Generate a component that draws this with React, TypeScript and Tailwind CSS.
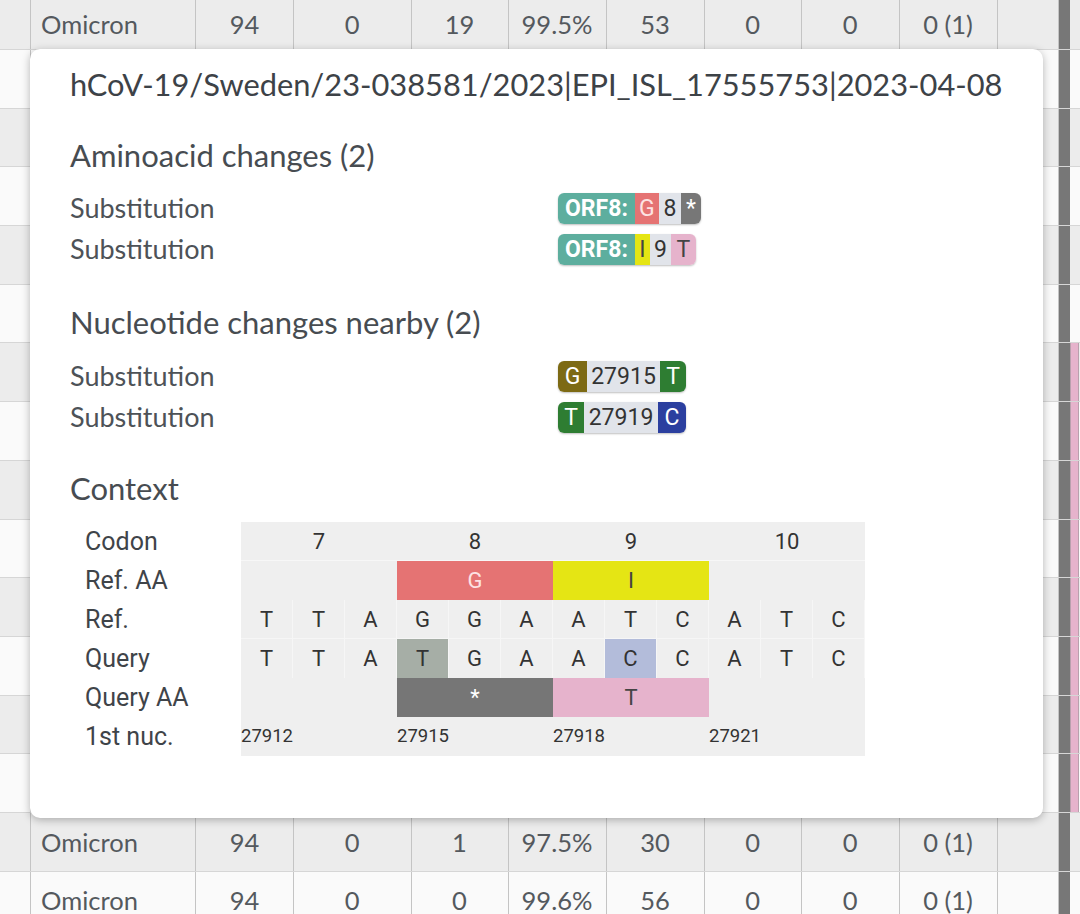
import React from 'react'

type Row = string[]

const cellW = [
  'w-[31px]', 'w-[165px]', 'w-[98px]', 'w-[117.5px]', 'w-[97px]', 'w-[98px]',
  'w-[98px]', 'w-[97.5px]', 'w-[97.5px]', 'w-[98px]', 'w-[61px]',
]

const filler: Row = ['', 'Omicron', '94', '0', '2', '98.9%', '41', '0', '0', '0 (1)', '']
const rows: Row[] = Array.from({ length: 16 }, (_, i) => {
  if (i === 0) return ['', 'Omicron', '94', '0', '19', '99.5%', '53', '0', '0', '0 (1)', '']
  if (i === 14) return ['', 'Omicron', '94', '0', '1', '97.5%', '30', '0', '0', '0 (1)', '']
  if (i === 15) return ['', 'Omicron', '94', '0', '0', '99.6%', '56', '0', '0', '0 (1)', '']
  return filler
})

function BgTable() {
  return (
    <div className="flex flex-col">
      {rows.map((r, i) => {
        const bg = i % 2 === 0 ? 'bg-[#ececec]' : 'bg-[#fafafa]'
        const h = i === 0 ? 'h-[50px]' : 'h-[58.7px]'
        const pink = i >= 6 && i <= 13
        return (
          <div key={i} className={`flex shrink-0 border-b border-[#d6d6d6] ${h} ${bg}`}>
            {r.map((c, j) => (
              <div
                key={j}
                className={`flex shrink-0 items-center border-r border-[#c4c4c4] text-[25.5px] text-[#54595e] ${cellW[j]} ${j === 1 ? 'justify-start pl-[10px]' : 'justify-center'}`}
              >
                {c}
              </div>
            ))}
            <div className="w-[11px] shrink-0 bg-[#777777]" />
            <div className={`w-[9px] shrink-0 ${pink ? 'border-x border-[#b9a0ad] bg-[#e6b3cc]' : ''}`} />
            <div className="w-[2px] shrink-0" />
          </div>
        )
      })}
    </div>
  )
}

function Seg({ className, children }: { className: string; children: React.ReactNode }) {
  return <span className={`flex h-full items-center justify-center ${className}`}>{children}</span>
}

function Badge({ children }: { children: React.ReactNode }) {
  return (
    <span className="inline-flex h-[31px] overflow-hidden rounded-[6px] text-[23px] leading-none shadow-[0_1px_2px_rgba(0,0,0,0.25)]" style={{ fontFamily: 'Roboto, sans-serif' }}>
      {children}
    </span>
  )
}

function ChangeRow({ badge }: { badge: React.ReactNode }) {
  return (
    <div className="flex h-[41px] items-center">
      <div className="w-[488px] text-[27px] text-[#4d5257]">Substitution</div>
      {badge}
    </div>
  )
}

const nucRef = ['T', 'T', 'A', 'G', 'G', 'A', 'A', 'T', 'C', 'A', 'T', 'C']
const nucQuery = ['T', 'T', 'A', 'T', 'G', 'A', 'A', 'C', 'C', 'A', 'T', 'C']

function Context() {
  const labels = ['Codon', 'Ref. AA', 'Ref.', 'Query', 'Query AA', '1st nuc.']
  return (
    <div className="flex" style={{ fontFamily: 'Roboto, sans-serif' }}>
      <div className="flex w-[171px] flex-col pl-[15px]">
        {labels.map(l => (
          <div key={l} className="flex h-[39px] items-center text-[25px] text-[#3f4449]">{l}</div>
        ))}
      </div>
      <div className="grid w-[624px] grid-cols-[repeat(12,52px)] grid-rows-[repeat(6,39px)] bg-[#efefef] text-[22px] text-[#333]">
        {['7', '8', '9', '10'].map(c => (
          <div key={c} className="col-span-3 flex items-center justify-center border-b border-[#f7f7f7]">{c}</div>
        ))}
        <div className="col-span-3" />
        <div className="col-span-3 flex items-center justify-center bg-[#e57373] text-[#fde3e3]">G</div>
        <div className="col-span-3 flex items-center justify-center bg-[#e5e514] text-[#444]">I</div>
        <div className="col-span-3" />
        {nucRef.map((n, i) => (
          <div key={'r' + i} className="flex items-center justify-center border-r border-b border-[#f6f6f6]">{n}</div>
        ))}
        {nucQuery.map((n, i) => (
          <div
            key={'q' + i}
            className={`flex items-center justify-center border-r border-[#f6f6f6] ${i === 3 ? 'bg-[#a6aea6]' : i === 7 ? 'bg-[#b3bcda]' : ''}`}
          >
            {n}
          </div>
        ))}
        <div className="col-span-3" />
        <div className="col-span-3 flex items-center justify-center bg-[#767676] text-white">*</div>
        <div className="col-span-3 flex items-center justify-center bg-[#e6b3cc] text-[#444]">T</div>
        <div className="col-span-3" />
        {['27912', '27915', '27918', '27921'].map(p => (
          <div key={p} className="col-span-3 flex items-center text-[18.5px] text-[#333]">{p}</div>
        ))}
      </div>
    </div>
  )
}

export default function App() {
  return (
    <div className="relative h-[914px] w-[1080px] overflow-hidden bg-white" style={{ fontFamily: 'Lato, sans-serif' }}>
      <BgTable />
      <div className="absolute left-[30px] top-[49px] h-[769px] w-[1013px] rounded-[10px] bg-white px-[40px] pt-[18px] shadow-[0_2px_8px_rgba(0,0,0,0.28)]">
        <div className="h-[36px] whitespace-nowrap text-[30.8px] leading-[36px] text-[#3d4247]">
          hCoV-19/Sweden/23-038581/2023|EPI_ISL_17555753|2023-04-08
        </div>

        <div className="mt-[34px] h-[36px] text-[31px] leading-[36px] text-[#474c51]">Aminoacid changes (2)</div>
        <div className="mt-[15px]">
          <ChangeRow
            badge={
              <Badge>
                <Seg className="bg-[#5dae9e] px-[7px] font-bold text-white">ORF8:</Seg>
                <Seg className="w-[24px] bg-[#e57373] text-[#fde3e3]">G</Seg>
                <Seg className="w-[22px] bg-[#e1e4ea] text-[#333]">8</Seg>
                <Seg className="w-[20px] bg-[#777777] text-white">*</Seg>
              </Badge>
            }
          />
          <ChangeRow
            badge={
              <Badge>
                <Seg className="bg-[#5dae9e] px-[7px] font-bold text-white">ORF8:</Seg>
                <Seg className="w-[15px] bg-[#e5e514] text-[#444]">I</Seg>
                <Seg className="w-[21px] bg-[#e1e4ea] text-[#333]">9</Seg>
                <Seg className="w-[25px] bg-[#e6b3cc] text-[#444]">T</Seg>
              </Badge>
            }
          />
        </div>

        <div className="mt-[34px] h-[36px] text-[31px] leading-[36px] text-[#474c51]">Nucleotide changes nearby (2)</div>
        <div className="mt-[16px]">
          <ChangeRow
            badge={
              <Badge>
                <Seg className="w-[29px] bg-[#7d6a14] text-white">G</Seg>
                <Seg className="w-[73px] bg-[#e1e4ea] text-[#333]">27915</Seg>
                <Seg className="w-[26px] bg-[#2e7d32] text-white">T</Seg>
              </Badge>
            }
          />
          <ChangeRow
            badge={
              <Badge>
                <Seg className="w-[26px] bg-[#2e7d32] text-white">T</Seg>
                <Seg className="w-[74px] bg-[#e1e4ea] text-[#333]">27919</Seg>
                <Seg className="w-[28px] bg-[#2b3f9f] text-white">C</Seg>
              </Badge>
            }
          />
        </div>

        <div className="mt-[32px] h-[36px] text-[31px] leading-[36px] text-[#474c51]">Context</div>
        <div className="mt-[16px]">
          <Context />
        </div>
      </div>
    </div>
  )
}
